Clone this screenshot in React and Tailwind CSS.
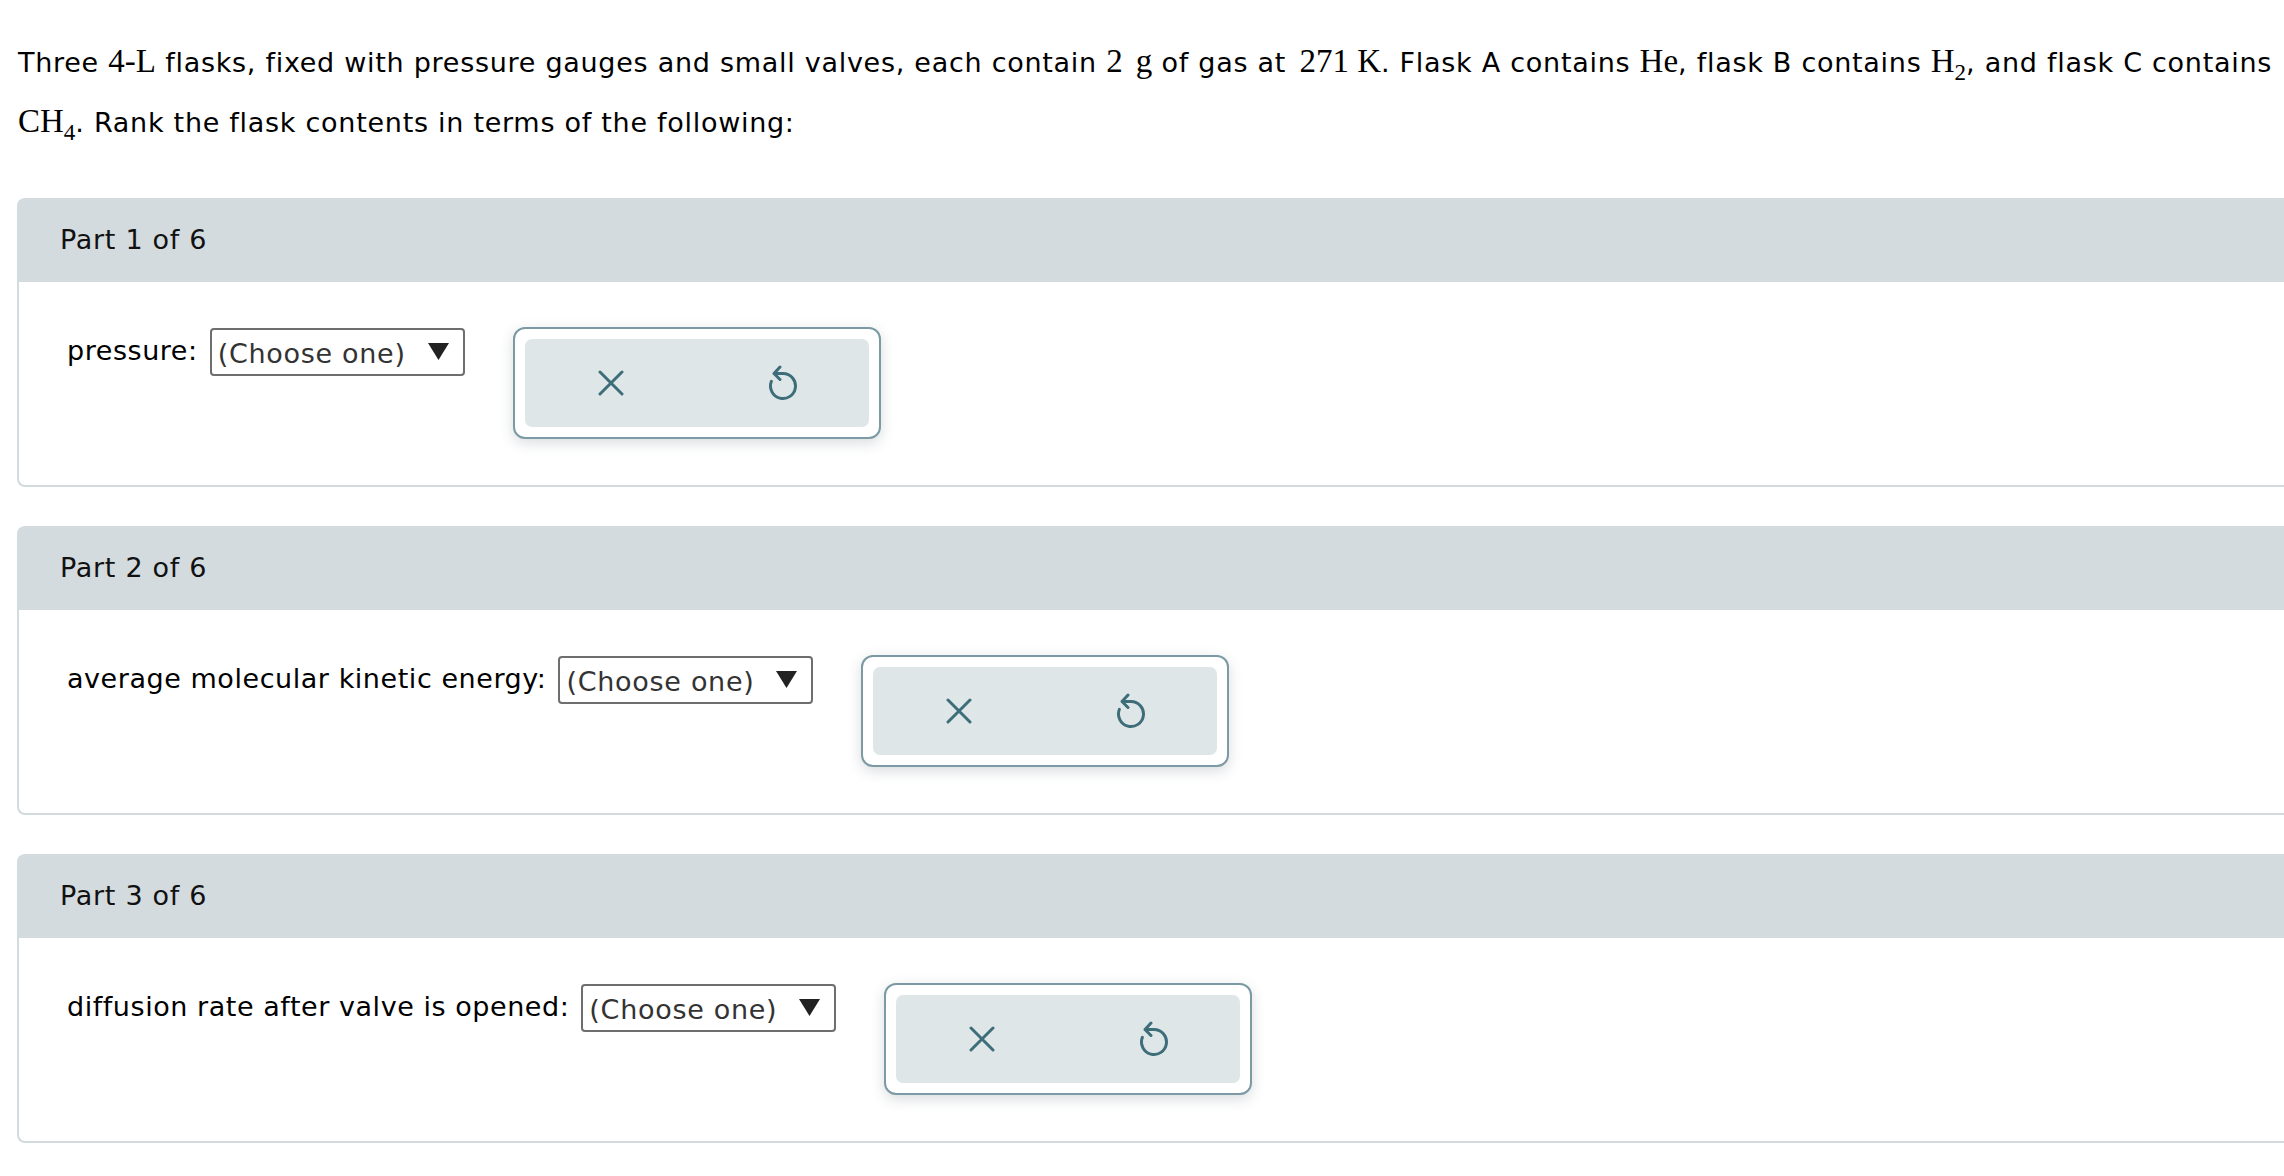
import React from "react";

const M = ({ children }) => (
  <span className="font-['Liberation_Serif',serif] text-[33px] leading-none tracking-normal">{children}</span>
);

const Sub = ({ children }) => (
  <sub className="text-[23px] bottom-[-0.35em]">{children}</sub>
);

function XIcon() {
  return (
    <svg width="26" height="26" viewBox="0 0 26 26" fill="none">
      <path d="M2 2 L24 24 M24 2 L2 24" stroke="#3e6d7a" strokeWidth="3" strokeLinecap="round" />
    </svg>
  );
}

function UndoIcon() {
  return (
    <svg width="36" height="36" viewBox="0 0 36 36" fill="none">
      <path
        d="M10 8.5 L18 8.5 A12.5 12.5 0 1 1 6.4 16.3"
        stroke="#3e6d7a"
        strokeWidth="3"
        strokeLinecap="round"
        strokeLinejoin="round"
      />
      <path
        d="M15 2 L9 8.5 L15 14.5"
        stroke="#3e6d7a"
        strokeWidth="3"
        strokeLinecap="round"
        strokeLinejoin="round"
      />
    </svg>
  );
}

function Select() {
  return (
    <div className="h-[48px] flex items-center border-2 border-[#6e6e6e] rounded-[4px] pl-[6px] pr-[14px] bg-white">
      <span className="text-[27px] tracking-[0.7px] text-[#333] mt-[5px] whitespace-nowrap">(Choose one)</span>
      <svg width="21" height="17" viewBox="0 0 21 17" className="ml-[22px] mt-[-2px]">
        <polygon points="0,0 21,0 10.5,17" fill="#222" />
      </svg>
    </div>
  );
}

function ButtonGroup() {
  return (
    <div className="border-2 border-[#7b9aa3] rounded-[12px] p-[10px] bg-white shadow-[0_4px_14px_rgba(40,60,70,0.18)]">
      <div className="w-[344px] h-[88px] bg-[#dfe6e8] rounded-[7px] grid grid-cols-2">
        <button className="flex items-center justify-center">
          <XIcon />
        </button>
        <button className="flex items-center justify-center">
          <UndoIcon />
        </button>
      </div>
    </div>
  );
}

function Part({ n, label }) {
  return (
    <div className="w-[2320px]">
      <div className="h-[84px] bg-[#d3dbde] rounded-tl-[8px] flex items-center pl-[43px] text-[27px] tracking-[0.7px] text-[#111]">
        Part {n} of 6
      </div>
      <div className="border-l-2 border-b-2 border-[#d3dbde] rounded-bl-[8px] pl-[48px] pt-[46px] pb-[46px] flex items-start">
        <span className="text-[27px] tracking-[0.55px] text-black mt-[3px] whitespace-nowrap mr-[12px]">{label}</span>
        <Select />
        <div className="ml-[48px] mt-[-1px]">
          <ButtonGroup />
        </div>
      </div>
    </div>
  );
}

export default function App() {
  return (
    <div className="w-[2284px] min-h-[1176px] overflow-hidden bg-white font-['DejaVu_Sans',sans-serif] text-black">
      <div className="pt-[33px] pl-[18px] text-[27px] tracking-[0.72px] leading-[60px] whitespace-nowrap">
        <div>
          Three <M>4-L</M> flasks, fixed with pressure gauges and small valves, each contain{" "}
          <M>
            2<span className="ml-[13px]">g</span>
          </M>{" "}
          of gas at <span className="ml-[4px]"></span>
          <M>271 K</M>. Flask A contains <M>He</M>, flask B contains{" "}
          <M>
            H<Sub>2</Sub>
          </M>
          , and flask C contains
        </div>
        <div>
          <M>
            CH<Sub>4</Sub>
          </M>
          . Rank the flask contents in terms of the following:
        </div>
      </div>
      <div className="pl-[17px] mt-[45px] flex flex-col gap-[39px]">
        <Part n={1} label="pressure:" />
        <Part n={2} label="average molecular kinetic energy:" />
        <Part n={3} label="diffusion rate after valve is opened:" />
      </div>
    </div>
  );
}
